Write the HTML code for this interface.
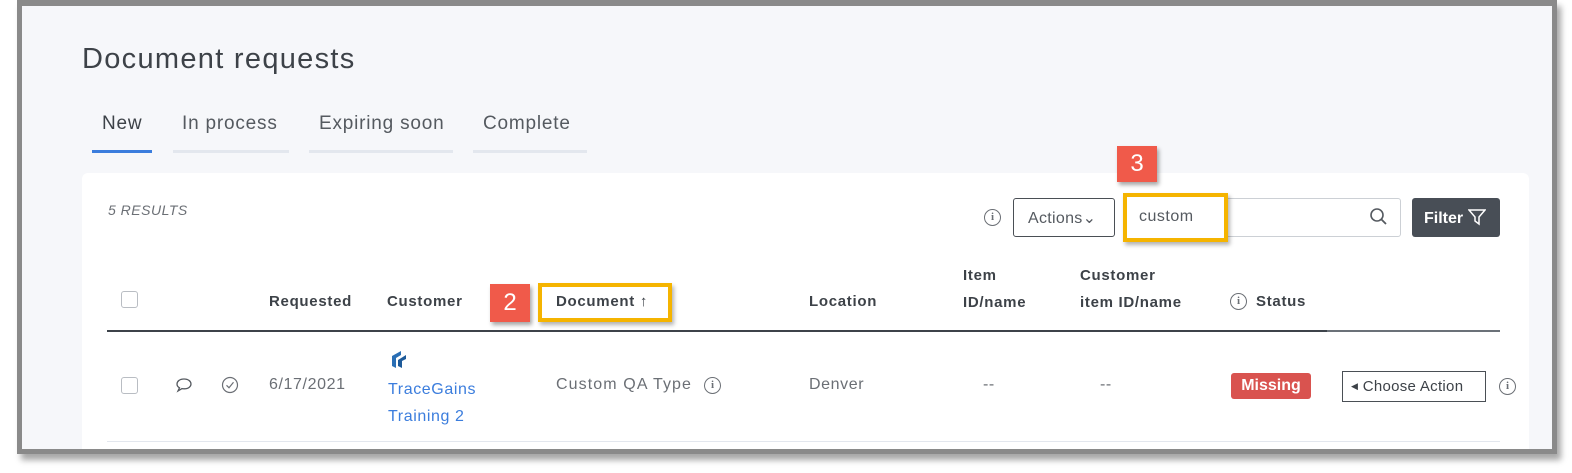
<!DOCTYPE html>
<html><head><style>
*{box-sizing:border-box;margin:0;padding:0}
body{width:1572px;height:473px;background:#fff;font-family:"Liberation Sans",sans-serif;position:relative;overflow:hidden}
.frame{position:absolute;left:17px;top:0;width:1540px;height:454px;border:5px solid #8a8a8a;border-top-width:6px;background:#f6f7fa;box-shadow:4px 6px 6px rgba(0,0,0,.35);overflow:hidden}
.a{position:absolute;white-space:nowrap}
.tab{position:absolute;top:150px;height:3px;background:#e3e7ee}
.card{position:absolute;left:60px;top:167px;width:1447px;height:300px;background:#fff;border-radius:6px}
.h{font-weight:bold;font-size:15px;color:#3d4248;letter-spacing:.7px}
.t{font-size:16px;color:#6b6f75;letter-spacing:.6px}
.cb{position:absolute;width:17px;height:17px;border:1px solid #b9bdc3;border-radius:3px;background:#fff}
.info{position:absolute;width:17px;height:17px;border:1.3px solid #6b6f75;border-radius:50%;font:bold 11px "Liberation Serif",serif;color:#6b6f75;text-align:center;line-height:15px}
.badge{position:absolute;background:#f05a4a;color:#fff;font-size:24px;text-align:center;box-shadow:2px 3px 4px rgba(0,0,0,.35)}
.obox{position:absolute;border:4px solid #f5b400;box-shadow:2px 3px 4px rgba(0,0,0,.3)}
.tb{font-size:19px;color:#555a60;letter-spacing:.8px}
</style></head><body>
<div class="frame">
<div class="a" style="left:60px;top:37px;font-size:29px;color:#3d4248;letter-spacing:1.3px">Document requests</div>
<div class="a tb" style="left:80px;top:107px;color:#3d4248">New</div>
<div class="a tb" style="left:160px;top:107px">In process</div>
<div class="a tb" style="left:297px;top:107px">Expiring soon</div>
<div class="a tb" style="left:461px;top:107px">Complete</div>
<div class="tab" style="left:70px;top:144px;width:60px;background:#3b7ddd"></div>
<div class="tab" style="left:151px;top:144px;width:116px"></div>
<div class="tab" style="left:287px;top:144px;width:144px"></div>
<div class="tab" style="left:451px;top:144px;width:114px"></div>
<div class="card"></div>
<div class="a" style="left:86px;top:196px;font-size:14px;font-style:italic;color:#6b6f75;letter-spacing:.5px">5 RESULTS</div>
<div class="info" style="left:962px;top:203px">i</div>
<div class="a" style="left:991px;top:192px;width:102px;height:39px;border:1px solid #4a4f55;border-radius:3px;background:#fff;font-size:16px;color:#555a60;padding:9px 0 0 14px;letter-spacing:.3px">Actions&#8964;</div>
<div class="a" style="left:1101px;top:192px;width:278px;height:39px;border:1px solid #ccd0d5;border-radius:3px;background:#fff"></div>
<svg class="a" style="left:1347px;top:201px" width="20" height="20" viewBox="0 0 20 20"><circle cx="8" cy="8" r="6" fill="none" stroke="#555a60" stroke-width="1.6"/><path d="M12.5 12.5L17 17" stroke="#555a60" stroke-width="1.8"/></svg>
<div class="obox" style="left:1101px;top:187px;width:105px;height:49px;background:#fff"></div>
<div class="a" style="left:1117px;top:202px;font-size:16px;color:#555a60;letter-spacing:.5px">custom</div>
<div class="badge" style="left:1095px;top:140px;width:40px;height:36px;line-height:36px">3</div>
<div class="a" style="left:1390px;top:192px;width:88px;height:39px;background:#484e56;border-radius:3px;color:#fff;font-size:16px;font-weight:bold;padding:10px 0 0 12px">Filter
<svg style="vertical-align:-3px" width="18" height="18" viewBox="0 0 18 18"><path d="M1 2H17L11 9V16L7 13V9Z" fill="none" stroke="#fff" stroke-width="1.5"/></svg></div>
<div class="cb" style="left:99px;top:285px"></div>
<div class="a h" style="left:247px;top:287px">Requested</div>
<div class="a h" style="left:365px;top:287px">Customer</div>
<div class="badge" style="left:468px;top:278px;width:40px;height:38px;line-height:38px">2</div>
<div class="obox" style="left:516px;top:277px;width:134px;height:39px"></div>
<div class="a h" style="left:534px;top:287px">Document <span style="font-weight:normal">&#8593;</span></div>
<div class="a h" style="left:787px;top:287px">Location</div>
<div class="a h" style="left:941px;top:256px;line-height:27px">Item<br>ID/name</div>
<div class="a h" style="left:1058px;top:256px;line-height:27px">Customer<br>item ID/name</div>
<div class="info" style="left:1208px;top:287px">i</div>
<div class="a h" style="left:1234px;top:287px">Status</div>
<div class="a" style="left:85px;top:324px;width:1393px;height:2px;background:#3d434a"></div>
<div class="a" style="left:1305px;top:324px;width:173px;height:2px;background:#6b7178"></div>
<div class="cb" style="left:99px;top:371px"></div>
<svg class="a" style="left:153px;top:371px" width="18" height="16" viewBox="0 0 18 16"><path d="M9 2C4.5 2 2 4.5 2 7c0 1.6 1 3 2.5 3.8L3 14l4-2.4c.6.1 1.3.2 2 .2 4.5 0 7-2.3 7-4.8S13.5 2 9 2z" fill="none" stroke="#555a60" stroke-width="1.3"/></svg>
<svg class="a" style="left:199px;top:370px" width="18" height="18" viewBox="0 0 18 18"><circle cx="9" cy="9" r="7.5" fill="none" stroke="#6b6f75" stroke-width="1.2"/><path d="M5.5 9.3L8 11.7 12.5 6.3" fill="none" stroke="#6b6f75" stroke-width="1.2"/></svg>
<div class="a t" style="left:247px;top:370px">6/17/2021</div>
<svg class="a" style="left:367px;top:342px" width="20" height="22" viewBox="0 0 20 22"><path d="M3 8L12 3V7L7 10V20L3 18Z" fill="#2a6fb5"/><path d="M9 12L17 7V11L13 13V20L9 18Z" fill="#1d5a99"/></svg>
<div class="a t" style="left:366px;top:370px;color:#3b7ddd;line-height:27px">TraceGains<br>Training 2</div>
<div class="a t" style="left:534px;top:370px;letter-spacing:1.1px">Custom QA Type</div>
<div class="info" style="left:682px;top:371px">i</div>
<div class="a t" style="left:787px;top:370px">Denver</div>
<div class="a t" style="left:961px;top:370px">--</div>
<div class="a t" style="left:1078px;top:370px">--</div>
<div class="a" style="left:1209px;top:367px;width:80px;height:26px;background:#d9534f;border-radius:3px;color:#fff;font-size:16px;font-weight:bold;text-align:center;line-height:26px">Missing</div>
<div class="a" style="left:1320px;top:365px;width:144px;height:31px;border:1px solid #4a4f55;background:#fff;font-size:15px;color:#3d4248;padding:6px 0 0 8px;letter-spacing:.3px"><span style="font-size:9px;vertical-align:2px">&#9664;</span> Choose Action</div>
<div class="info" style="left:1477px;top:372px">i</div>
<div class="a" style="left:85px;top:435px;width:1393px;height:1px;background:#e3e7ee"></div>
</div>
</body></html>
